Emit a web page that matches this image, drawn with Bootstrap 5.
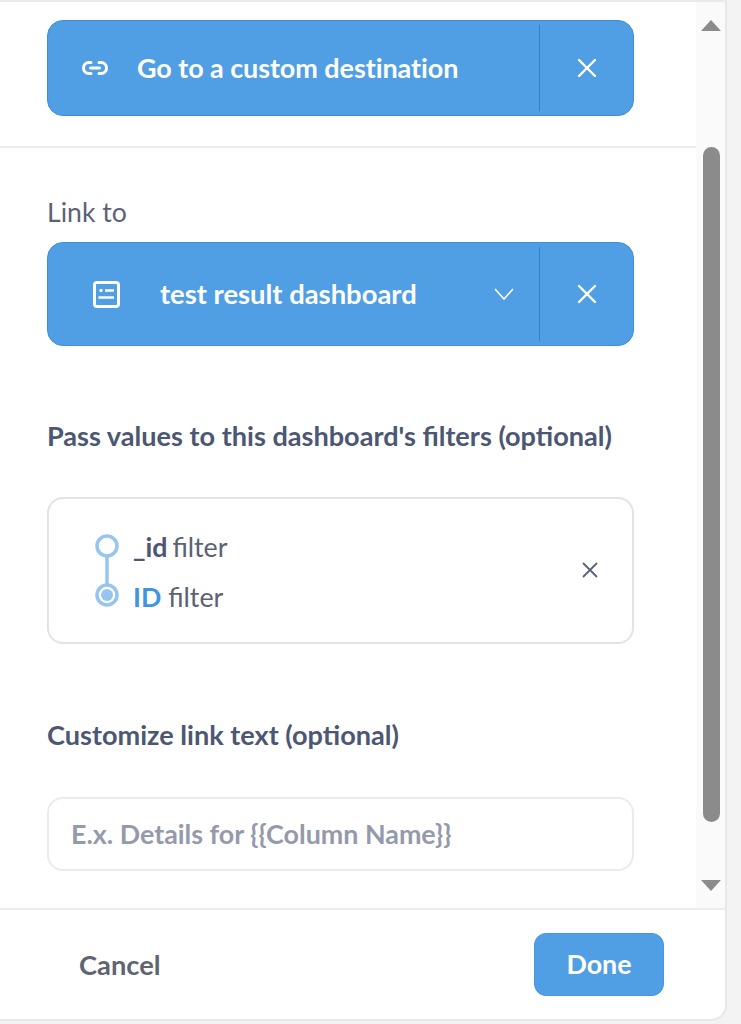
<!DOCTYPE html>
<html lang="en">
<head>
    <meta charset="UTF-8">
    <title>Click behavior</title>
    <link href="https://cdn.jsdelivr.net/npm/bootstrap@5.3.0/dist/css/bootstrap.min.css" rel="stylesheet">
    <style>
        html, body { height: 100%; }
        body {
            background: #f3f3f4;
            font-family: Lato, "Liberation Sans", sans-serif;
            color: #4c5773;
            overflow: hidden;
        }
        .side-panel {
            width: 727px;
            height: 1021px;
            background: #fff;
            border-top: 2px solid #ebebec;
            border-right: 2px solid #e8e8ea;
            border-bottom: 2px solid #e8e8ea;
            border-bottom-right-radius: 16px;
        }
        .panel-body { height: 906px; }
        .panel-main { width: 696px; }
        .top-block { height: 146px; padding: 18px 0 0 47px; border-bottom: 2px solid #ededee; }
        .form-block { padding-left: 47px; }
        .blue-box {
            width: 587px;
            background: #509ee3;
            border: 1px solid #3f8fd8;
            border-radius: 16px;
            color: #fff;
            font-weight: 700;
        }
        .box-link { height: 96px; font-size: 27px; letter-spacing: -0.08px; }
        .box-dash { height: 104px; font-size: 27.4px; }
        .box-text { flex: 1; min-width: 0; }
        .box-link .box-text { padding-left: 29px; }
        .box-dash .box-text { padding-left: 40px; }
        .link-ico { margin-left: 34px; }
        .dash-ico { margin-left: 45px; }
        .chev-ico { margin-right: 25px; }
        .box-close {
            width: 94px;
            align-self: stretch;
            margin: 4px 0;
            border-left: 1px solid #2f82d0;
        }
        .link-label { font-size: 26.6px; line-height: 32px; margin: 48px 0 14px; color: #5b6275; }
        .sec-label { font-size: 27.1px; font-weight: 700; line-height: 32px; color: #4c5773; }
        .sec-pass { margin-top: 74px; margin-bottom: 45px; }
        .sec-custom { margin-top: 75px; margin-bottom: 46px; }
        .map-card {
            width: 587px;
            height: 147px;
            border: 2px solid #e2e3e8;
            border-radius: 16px;
            padding-left: 46px;
        }
        .map-rows { font-size: 26.8px; line-height: 50px; margin-left: 14px; padding-top: 2px; }
        .map-src { color: #4c5773; font-weight: 700; }
        .map-dst { color: #3f95e4; font-weight: 700; }
        .map-word { color: #5b6275; }
        .map-src + .map-word { margin-left: -2px; }
        .map-close { margin: 0 34px 2px 0; }
        .custom-input {
            width: 587px;
            height: 74px;
            border: 2px solid #eaebee;
            border-radius: 16px;
            padding: 0 22px 2px;
            font-size: 26.85px;
            font-weight: 700;
            color: #4c5773;
        }
        .custom-input::placeholder { color: #949aab; opacity: 1; }
        .scroll-rail { width: 29px; background: #fafafa; }
        .rail-up { margin-top: 18px; height: 127px; }
        .rail-thumb { width: 17px; height: 675px; background: #8b8b8b; border-radius: 9px; margin-left: 7px; }
        .rail-down { margin-top: 58px; }
        .panel-foot { height: 112px; border-top: 2px solid #ededee; padding: 0 61px 0 79px; }
        .btn-cancel {
            font-size: 27.3px;
            font-weight: 700;
            color: #5f6570;
            padding: 0;
            border: 0;
        }
        .btn-done {
            width: 130px;
            height: 63px;
            font-size: 26.8px;
            font-weight: 700;
            background: #509ee3;
            border: 1px solid #4a97de;
            border-radius: 12px;
            padding: 1px 0 0;
            margin-top: -2px;
        }
    </style>
</head>

<body>
<div class="side-panel">
    <div class="panel-body d-flex">
        <div class="panel-main">
            <div class="top-block">
                <div class="blue-box box-link d-flex align-items-center">
                    <svg class="link-ico" width="26" height="14" viewBox="0 0 26 14" fill="none" stroke="#fff" stroke-width="3" stroke-linecap="round">
                        <path d="M9 1.5H7a5.5 5.5 0 0 0 0 11h2"/>
                        <path d="M17 1.5h2a5.5 5.5 0 0 1 0 11h-2"/>
                        <path d="M8.5 7h9"/>
                    </svg>
                    <div class="box-text">Go to a custom destination</div>
                    <div class="box-close d-flex align-items-center justify-content-center">
                        <svg width="20" height="20" viewBox="0 0 20 20" stroke="#fff" stroke-width="2.4" stroke-linecap="round"><path d="M2 2l16 16M18 2L2 18"/></svg>
                    </div>
                </div>
            </div>

            <div class="form-block">
                <div class="link-label">Link to</div>
                <div class="blue-box box-dash d-flex align-items-center">
                    <svg class="dash-ico" width="27" height="27" viewBox="0 0 27 27" fill="none" stroke="#fff">
                        <rect x="1.5" y="1.5" width="24" height="24" rx="2.5" stroke-width="3"/>
                        <circle cx="8" cy="9.5" r="1.7" fill="#fff" stroke="none"/>
                        <path d="M12 9.5h9M5.5 16.5h15.5" stroke-width="2.4"/>
                    </svg>
                    <div class="box-text">test result dashboard</div>
                    <svg class="chev-ico" width="20" height="12" viewBox="0 0 20 12" fill="none" stroke="#fff" stroke-width="1.6"><path d="M1 1l9 10 9-10"/></svg>
                    <div class="box-close d-flex align-items-center justify-content-center">
                        <svg width="20" height="20" viewBox="0 0 20 20" stroke="#fff" stroke-width="2.4" stroke-linecap="round"><path d="M2 2l16 16M18 2L2 18"/></svg>
                    </div>
                </div>

                <div class="sec-label sec-pass">Pass values to this dashboard's filters (optional)</div>
                <div class="map-card d-flex align-items-center">
                    <svg width="24" height="73" viewBox="0 0 24 73" fill="none" stroke="#97c5ef" stroke-width="3.5">
                        <circle cx="12" cy="12" r="10"/>
                        <path d="M12 22v29"/>
                        <circle cx="12" cy="61" r="10"/>
                        <circle cx="12" cy="61" r="6" fill="#97c5ef" stroke="none"/>
                    </svg>
                    <div class="map-rows flex-grow-1">
                        <div><span class="map-src">_id</span> <span class="map-word">filter</span></div>
                        <div><span class="map-dst">ID</span> <span class="map-word">filter</span></div>
                    </div>
                    <svg class="map-close" width="16" height="16" viewBox="0 0 16 16" stroke="#5b6275" stroke-width="1.8" stroke-linecap="round"><path d="M1.5 1.5l13 13M14.5 1.5l-13 13"/></svg>
                </div>

                <div class="sec-label sec-custom">Customize link text (optional)</div>
                <input class="custom-input d-block" type="text" placeholder="E.x. Details for {{Column Name}}">
            </div>
        </div>

        <div class="scroll-rail">
            <div class="rail-up d-flex justify-content-center">
                <svg width="20" height="11" viewBox="0 0 20 11"><path d="M10 0l10 11H0z" fill="#8b8b8b"/></svg>
            </div>
            <div class="rail-thumb"></div>
            <div class="rail-down d-flex justify-content-center">
                <svg width="20" height="11" viewBox="0 0 20 11"><path d="M0 0h20L10 11z" fill="#8b8b8b"/></svg>
            </div>
        </div>
    </div>

    <div class="panel-foot d-flex align-items-center justify-content-between">
        <button class="btn btn-cancel" type="button">Cancel</button>
        <button class="btn btn-primary btn-done" type="button">Done</button>
    </div>
</div>
<script src="https://cdn.jsdelivr.net/npm/bootstrap@5.3.0/dist/js/bootstrap.bundle.min.js"></script>
</body>
</html>
